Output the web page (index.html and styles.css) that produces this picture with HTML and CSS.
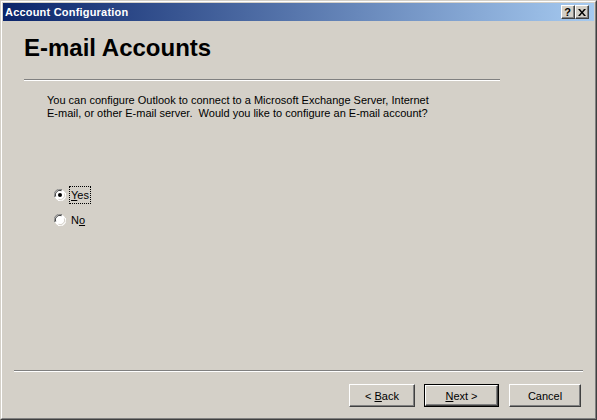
FILE: index.html
```html
<!DOCTYPE html>
<html>
<head>
<meta charset="utf-8">
<link rel="stylesheet" href="styles.css">
</head>
<body>
<div class="window">
  <div class="frame">
    <div class="titlebar">
      <span class="title">Account Configuration</span>
      <div class="caption-buttons">
        <span class="cap-btn help">?</span>
        <span class="cap-btn close">
          <svg width="8" height="7" viewBox="0 0 8 7"><path d="M0 0h2l2 2.5 2-2.5h2L5 3.5 8 7H6L4 4.5 2 7H0l3-3.5z" fill="#000"/></svg>
        </span>
      </div>
    </div>
    <div class="main">
      <h1 class="heading">E-mail Accounts</h1>
      <div class="sep sep-top"></div>
      <p class="intro">You can configure Outlook to connect to a Microsoft Exchange Server, Internet<br>E-mail, or other E-mail server.&nbsp; Would you like to configure an E-mail account?</p>
      <div class="options">
        <label class="radio-row">
          <svg class="radio" width="12" height="12" viewBox="0 0 12 12">
            <circle cx="6" cy="6" r="5.5" fill="#fff"/>
            <path d="M0.6 8A5.6 5.6 0 0 1 8 0.6" stroke="#808080" stroke-width="1" fill="none"/>
            <path d="M1.7 7.6A4.5 4.5 0 0 1 7.6 1.7" stroke="#404040" stroke-width="1" fill="none"/>
            <path d="M4 11.4A5.6 5.6 0 0 0 11.4 4" stroke="#fff" stroke-width="1" fill="none"/>
            <path d="M4.4 10.3A4.5 4.5 0 0 0 10.3 4.4" stroke="#D4D0C8" stroke-width="1" fill="none"/>
            <circle cx="6" cy="6" r="2" fill="#000"/>
          </svg>
          <span class="radio-label focus"><u>Y</u>es</span>
        </label>
        <label class="radio-row">
          <svg class="radio" width="12" height="12" viewBox="0 0 12 12">
            <circle cx="6" cy="6" r="5.5" fill="#fff"/>
            <path d="M0.6 8A5.6 5.6 0 0 1 8 0.6" stroke="#808080" stroke-width="1" fill="none"/>
            <path d="M1.7 7.6A4.5 4.5 0 0 1 7.6 1.7" stroke="#404040" stroke-width="1" fill="none"/>
            <path d="M4 11.4A5.6 5.6 0 0 0 11.4 4" stroke="#fff" stroke-width="1" fill="none"/>
            <path d="M4.4 10.3A4.5 4.5 0 0 0 10.3 4.4" stroke="#D4D0C8" stroke-width="1" fill="none"/>
          </svg>
          <span class="radio-label">N<u>o</u></span>
        </label>
      </div>
    </div>
    <div class="footer">
      <div class="sep"></div>
      <div class="buttons">
        <button class="btn btn-back">&lt; <u>B</u>ack</button>
        <button class="btn btn-default"><span><u>N</u>ext &gt;</span></button>
        <button class="btn btn-cancel">Cancel</button>
      </div>
    </div>
  </div>
</div>
</body>
</html>
```

FILE: styles.css
```css
html, body {
  margin: 0;
  padding: 0;
  background: #D4D0C8;
}
body {
  font-family: "Liberation Sans", Arial, sans-serif;
  font-size: 11px;
  color: #000;
}
.window {
  width: 597px;
  height: 420px;
  box-sizing: border-box;
  border: 1px solid;
  border-color: #D4D0C8 #404040 #404040 #D4D0C8;
  background: #D4D0C8;
}
.frame {
  height: 100%;
  box-sizing: border-box;
  border: 1px solid;
  border-color: #FFFFFF #808080 #808080 #FFFFFF;
  padding: 1px;
  display: flex;
  flex-direction: column;
}
.titlebar {
  height: 18px;
  background: linear-gradient(to right, #0A246A, #A6CAF0);
  display: flex;
  align-items: center;
  justify-content: space-between;
  padding: 0 5px 0 2px;
  flex: none;
}
.title {
  color: #fff;
  font-weight: bold;
  font-size: 11px;
  letter-spacing: 0.2px;
}
.caption-buttons {
  display: flex;
  gap: 0;
}
.cap-btn {
  width: 14px;
  height: 14px;
  box-sizing: border-box;
  background: #D4D0C8;
  border: 1px solid;
  border-color: #fff #404040 #404040 #fff;
  box-shadow: inset -1px -1px 0 #808080;
  display: flex;
  align-items: center;
  justify-content: center;
  font-weight: bold;
  font-size: 11px;
  line-height: 1;
}
.cap-btn.help {
  padding-right: 1px;
}
.main {
  flex: 1;
  padding-left: 21px;
}
.heading {
  margin: 13px 0 0 0;
  font-family: "Liberation Sans", Arial, sans-serif;
  font-size: 24px;
  line-height: 28px;
  font-weight: bold;
}
.sep {
  height: 0;
  border-top: 1px solid #808080;
  border-bottom: 1px solid #FFFFFF;
}
.sep-top {
  width: 476px;
  margin-top: 17px;
}
.intro {
  margin: 13px 0 0 23px;
  line-height: 13px;
  font-size: 11px;
}
.options {
  margin: 65px 0 0 30px;
  display: flex;
  flex-direction: column;
  gap: 6px;
}
.radio-row {
  display: flex;
  align-items: center;
  height: 19px;
}
.radio {
  flex: none;
}
.radio-label {
  margin-left: 3px;
  padding: 2px 1px;
  border: 1px dotted transparent;
}
.radio-label.focus {
  border-color: #000;
}
.footer {
  padding: 0 11px 10px 11px;
}
.buttons {
  display: flex;
  justify-content: flex-end;
  margin-top: 12px;
  padding-right: 2px;
}
.btn {
  height: 23px;
  width: 75px;
  box-sizing: border-box;
  background: #D4D0C8;
  font-family: "Liberation Sans", Arial, sans-serif;
  font-size: 11px;
  color: #000;
  border: 1px solid;
  border-color: #fff #404040 #404040 #fff;
  box-shadow: inset -1px -1px 0 #808080;
  padding: 0;
  margin: 0;
}
.btn-back {
  width: 66px;
  margin-right: 9px;
}
.btn-default {
  border: 1px solid #000;
  box-shadow: none;
  padding: 0;
  margin-right: 10px;
}
.btn-default span {
  display: flex;
  align-items: center;
  justify-content: center;
  height: 100%;
  box-sizing: border-box;
  border: 1px solid;
  border-color: #fff #404040 #404040 #fff;
  box-shadow: inset -1px -1px 0 #808080;
}
.btn-cancel {
  width: 72px;
}
```
